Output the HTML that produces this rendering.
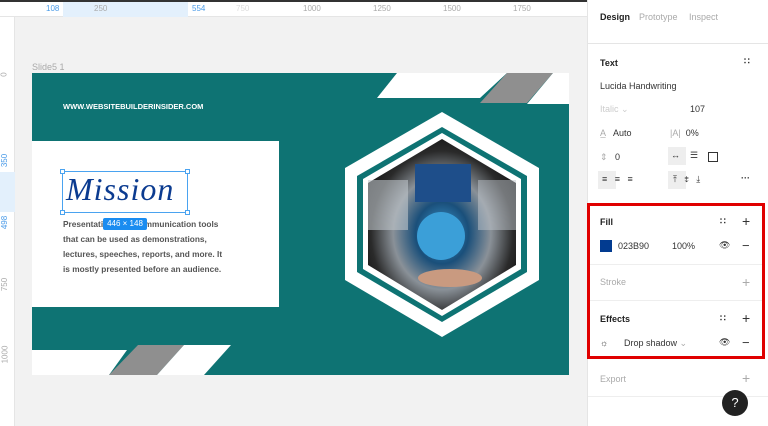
<!DOCTYPE html>
<html><head><meta charset="utf-8"><style>
*{margin:0;padding:0;box-sizing:border-box}
body{width:768px;height:426px;overflow:hidden;background:#f2f2f2;font-family:"Liberation Sans",sans-serif;position:relative}
.a{position:absolute}
.rt{color:#aaa;font-size:8px}
.p{font-size:9px;color:#333}
.h{font-size:9px;font-weight:bold;color:#222}
.g{color:#aaa}
</style></head><body>
<div class="a" style="left:0;top:0;width:587px;height:17px;background:#fff;border-bottom:1px solid #e5e5e5"></div>
<div class="a" style="left:0;top:0;width:768px;height:2px;background:#333"></div>
<div class="a" style="left:63px;top:2px;width:125px;height:15px;background:#e3f0fc"></div>
<div class="a rt" style="left:46px;top:4px;color:#4a9be8">108</div>
<div class="a rt" style="left:94px;top:4px">250</div>
<div class="a rt" style="left:192px;top:4px;color:#4a9be8">554</div>
<div class="a rt" style="left:236px;top:4px;color:#ddd">750</div>
<div class="a rt" style="left:303px;top:4px">1000</div>
<div class="a rt" style="left:373px;top:4px">1250</div>
<div class="a rt" style="left:443px;top:4px">1500</div>
<div class="a rt" style="left:513px;top:4px">1750</div>
<div class="a" style="left:0;top:17px;width:15px;height:409px;background:#fff;border-right:1px solid #e5e5e5"></div>
<div class="a" style="left:0;top:172px;width:15px;height:40px;background:#e3f0fc"></div>
<div class="a rt" style="left:2px;top:70px;transform:rotate(-90deg)">0</div>
<div class="a rt" style="left:-2px;top:156px;transform:rotate(-90deg);color:#4a9be8">350</div>
<div class="a rt" style="left:-2px;top:218px;transform:rotate(-90deg);color:#4a9be8">498</div>
<div class="a rt" style="left:-2px;top:280px;transform:rotate(-90deg)">750</div>
<div class="a rt" style="left:-4px;top:350px;transform:rotate(-90deg)">1000</div>
<div class="a" style="left:32px;top:62px;font-size:9px;color:#aaa">Slide5 1</div>

<svg class="a" style="left:32px;top:73px" width="537" height="302" viewBox="32 73 537 302">
<rect x="32" y="73" width="537" height="302" fill="#0e7373"/>
<polygon points="397,73 507,73 480,98 377,98" fill="#fff"/>
<polygon points="507,73 553,73 527,103 480,103" fill="#8f8f8f"/>
<polygon points="553,73 569,73 569,104 527,104" fill="#fff"/>
<rect x="32" y="141" width="247" height="166" fill="#fff"/>
<polygon points="32,350 127,350 109,375 32,375" fill="#fff"/>
<polygon points="138,345 184,345 157,375 109,375" fill="#8f8f8f"/>
<polygon points="184,345 231,345 204,375 157,375" fill="#fff"/>
<polygon points="442,112 539,168 539,280 442,337 345,280 345,168" fill="#fff"/>
<polygon points="442,127 527,176 527,272 442,322 357,272 357,176" fill="#0e7373"/>
<polygon points="442,133 521,179 521,269 442,316 363,269 363,179" fill="#fff"/>
<defs><radialGradient id="rg" cx="0.5" cy="0.55" r="0.6"><stop offset="0" stop-color="#3f9fd8"/><stop offset="0.3" stop-color="#1a4f7a"/><stop offset="0.55" stop-color="#8a9198"/><stop offset="0.8" stop-color="#2a2a2a"/><stop offset="1" stop-color="#111"/></radialGradient></defs>
<polygon points="442,139 516,183 516,265 442,310 368,265 368,183" fill="url(#rg)"/>
<rect x="415" y="164" width="56" height="38" fill="#1e4e8a"/>
<rect x="368" y="180" width="40" height="50" fill="#bfc6cc" opacity=".6"/>
<rect x="478" y="180" width="38" height="50" fill="#bfc6cc" opacity=".5"/>
<circle cx="441" cy="236" r="24" fill="#3b9fd8"/>
<ellipse cx="450" cy="278" rx="32" ry="9" fill="#c99a80"/>
</svg>
<div class="a" style="left:63px;top:102px;font-size:7.5px;font-weight:bold;color:#fff">WWW.WEBSITEBUILDERINSIDER.COM</div>
<div class="a" style="left:66px;top:171px;font-family:'Liberation Serif',serif;font-style:italic;font-size:32px;color:#0b3b90;letter-spacing:1px">Mission</div>
<div class="a" style="left:62px;top:171px;width:126px;height:42px;border:1px solid #4aa3f0"></div>
<div class="a" style="left:60px;top:169px;width:5px;height:5px;background:#fff;border:1px solid #4aa3f0"></div>
<div class="a" style="left:185px;top:169px;width:5px;height:5px;background:#fff;border:1px solid #4aa3f0"></div>
<div class="a" style="left:60px;top:210px;width:5px;height:5px;background:#fff;border:1px solid #4aa3f0"></div>
<div class="a" style="left:185px;top:210px;width:5px;height:5px;background:#fff;border:1px solid #4aa3f0"></div>
<div class="a" style="left:63px;top:217px;font-size:8.3px;font-weight:bold;color:#555;line-height:15px;white-space:nowrap">Presentations are communication tools<br>that can be used as demonstrations,<br>lectures, speeches, reports, and more. It<br>is mostly presented before an audience.</div>
<div class="a" style="left:103px;top:218px;width:44px;height:12px;background:#1a8cf0;border-radius:2px;color:#fff;font-size:8px;text-align:center;line-height:12px">446 × 148</div>

<div class="a" style="left:587px;top:0;width:181px;height:426px;background:#fff;border-left:1px solid #e5e5e5"></div>
<div class="a" style="left:600px;top:12px;font-size:9px;font-weight:bold;color:#222">Design</div>
<div class="a g" style="left:639px;top:12px;font-size:9px">Prototype</div>
<div class="a g" style="left:689px;top:12px;font-size:9px">Inspect</div>
<div class="a" style="left:588px;top:43px;width:180px;height:1px;background:#e5e5e5"></div>
<div class="a h" style="left:600px;top:58px">Text</div>
<div class="a h" style="left:744px;top:56px">∷</div>
<div class="a p" style="left:600px;top:81px">Lucida Handwriting</div>
<div class="a g" style="left:600px;top:104px;font-size:9px;color:#ccc">Italic ⌄</div>
<div class="a p" style="left:690px;top:104px">107</div>
<div class="a p" style="left:600px;top:128px"><span class="g">A̲</span>&nbsp;&nbsp; Auto</div>
<div class="a p" style="left:670px;top:128px"><span class="g">|A|</span>&nbsp; 0%</div>
<div class="a p" style="left:600px;top:152px"><span class="g">⇕</span>&nbsp;&nbsp; 0</div>
<div class="a" style="left:668px;top:147px;width:18px;height:18px;background:#eee"></div>
<div class="a p" style="left:671px;top:150px">↔</div>
<div class="a p" style="left:690px;top:150px">☰</div>
<div class="a" style="left:708px;top:152px;width:10px;height:10px;border:1px solid #333"></div>
<div class="a" style="left:598px;top:171px;width:18px;height:18px;background:#eee"></div>
<div class="a p" style="left:602px;top:174px">≡ &nbsp; ≡ &nbsp; ≡</div>
<div class="a" style="left:668px;top:171px;width:18px;height:18px;background:#eee"></div>
<div class="a p" style="left:673px;top:174px">⤒ &nbsp; ⇟ &nbsp; ⤓</div>
<div class="a p" style="left:741px;top:173px;font-weight:bold">···</div>
<div class="a" style="left:587px;top:203px;width:178px;height:156px;border:3px solid #e00000"></div>
<div class="a h" style="left:600px;top:217px">Fill</div>
<div class="a h" style="left:720px;top:216px">∷</div>
<div class="a" style="left:742px;top:213px;font-size:14px;color:#333">+</div>
<div class="a" style="left:600px;top:240px;width:12px;height:12px;background:#023b90"></div>
<div class="a p" style="left:618px;top:241px">023B90</div>
<div class="a p" style="left:672px;top:241px">100%</div>
<div class="a p" style="left:719px;top:240px">👁</div>
<div class="a p" style="left:742px;top:238px;font-size:13px">−</div>
<div class="a" style="left:590px;top:264px;width:172px;height:1px;background:#eee"></div>
<div class="a g" style="left:600px;top:277px;font-size:9px">Stroke</div>
<div class="a g" style="left:742px;top:274px;font-size:14px">+</div>
<div class="a" style="left:590px;top:300px;width:172px;height:1px;background:#eee"></div>
<div class="a h" style="left:600px;top:314px">Effects</div>
<div class="a h" style="left:720px;top:313px">∷</div>
<div class="a" style="left:742px;top:310px;font-size:14px;color:#333">+</div>
<div class="a p" style="left:600px;top:338px">☼</div>
<div class="a p" style="left:624px;top:338px">Drop shadow <span class="g">⌄</span></div>
<div class="a p" style="left:719px;top:337px">👁</div>
<div class="a p" style="left:742px;top:335px;font-size:13px">−</div>
<div class="a g" style="left:600px;top:374px;font-size:9px">Export</div>
<div class="a g" style="left:742px;top:370px;font-size:14px">+</div>
<div class="a" style="left:588px;top:396px;width:180px;height:1px;background:#eee"></div>
<div class="a" style="left:722px;top:390px;width:26px;height:26px;border-radius:50%;background:#222;color:#fff;font-size:13px;text-align:center;line-height:26px">?</div>
</body></html>
